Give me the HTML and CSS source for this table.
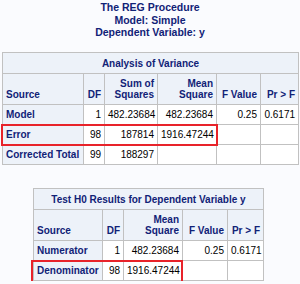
FILE: index.html
```html
<!DOCTYPE html>
<html>
<head>
<meta charset="utf-8">
<link rel="stylesheet" href="styles.css">
</head>
<body>
<div class="titles">
  <div>The REG Procedure</div>
  <div>Model: Simple</div>
  <div>Dependent Variable: y</div>
</div>

<div class="wrap wrap-anova">
  <table class="tbl tbl-anova">
    <colgroup>
      <col class="c-src1"><col class="c-df"><col class="c-ss"><col class="c-ms"><col class="c-f"><col class="c-p1">
    </colgroup>
    <thead>
      <tr><th colspan="6" class="cap">Analysis of Variance</th></tr>
      <tr>
        <th class="hl">Source</th>
        <th class="hr">DF</th>
        <th class="hr">Sum of<br>Squares</th>
        <th class="hr">Mean<br>Square</th>
        <th class="hr">F Value</th>
        <th class="hr">Pr &gt; F</th>
      </tr>
    </thead>
    <tbody>
      <tr><th class="rh">Model</th><td>1</td><td>482.23684</td><td>482.23684</td><td>0.25</td><td>0.6171</td></tr>
      <tr><th class="rh">Error</th><td>98</td><td>187814</td><td>1916.47244</td><td></td><td></td></tr>
      <tr><th class="rh">Corrected Total</th><td>99</td><td>188297</td><td></td><td></td><td></td></tr>
    </tbody>
  </table>
  <span class="mark mark-1"></span>
</div>

<div class="wrap wrap-test">
  <table class="tbl tbl-test">
    <colgroup>
      <col class="c-src2"><col class="c-df"><col class="c-ms"><col class="c-f2"><col class="c-p2">
    </colgroup>
    <thead>
      <tr><th colspan="5" class="cap">Test H0 Results for Dependent Variable y</th></tr>
      <tr>
        <th class="hl">Source</th>
        <th class="hr">DF</th>
        <th class="hr">Mean<br>Square</th>
        <th class="hr">F Value</th>
        <th class="hr">Pr &gt; F</th>
      </tr>
    </thead>
    <tbody>
      <tr><th class="rh">Numerator</th><td>1</td><td>482.23684</td><td>0.25</td><td>0.6171</td></tr>
      <tr><th class="rh">Denominator</th><td>98</td><td>1916.47244</td><td></td><td></td></tr>
    </tbody>
  </table>
  <span class="mark mark-2"></span>
</div>
</body>
</html>
```

FILE: styles.css
```css
html, body {
  margin: 0;
  padding: 0;
}
body {
  background: #fafbfe;
  font-family: "Liberation Sans", Arial, sans-serif;
  font-size: 10px;
  color: #000;
}
.titles {
  padding-top: 1px;
  text-align: center;
  font-weight: bold;
  font-size: 10.5px;
  line-height: 12.6px;
  color: #112277;
}
.wrap {
  position: relative;
  margin: 0 auto;
}
.wrap-anova {
  width: 296px;
  margin-top: 13px;
}
.wrap-test {
  width: 230px;
  margin-top: 23px;
  left: -2px;
}
.tbl {
  border-collapse: collapse;
  table-layout: fixed;
  width: 100%;
  border: 1px solid #c1c1c1;
}
.tbl th, .tbl td {
  border: 1px solid #c1c1c1;
  padding: 4px 3px;
  line-height: 11px;
  white-space: nowrap;
  overflow: hidden;
}
.tbl th {
  background: #edf2f9;
  color: #112277;
  font-weight: bold;
}
.tbl td {
  background: #fff;
  text-align: right;
}
.tbl .cap {
  text-align: center;
  padding-top: 5px;
  padding-bottom: 4px;
}
.tbl .hl {
  text-align: left;
  vertical-align: bottom;
}
.tbl .hr {
  text-align: right;
  vertical-align: bottom;
}
.tbl .rh {
  text-align: left;
}
.c-src1 { width: 81px; }
.c-df { width: 21px; }
.c-ss { width: 53px; }
.c-ms { width: 59px; }
.c-f { width: 44px; }
.c-p1 { width: 38px; }
.c-src2 { width: 69px; }
.c-f2 { width: 45px; }
.c-p2 { width: 36px; }
.mark {
  position: absolute;
  border: 2px solid #e8232a;
  box-sizing: border-box;
  pointer-events: none;
}
.mark-1 {
  left: -1px;
  top: 72px;
  width: 217px;
  height: 22px;
}
.mark-2 {
  left: -2px;
  top: 72px;
  width: 152px;
  height: 24px;
}
```
